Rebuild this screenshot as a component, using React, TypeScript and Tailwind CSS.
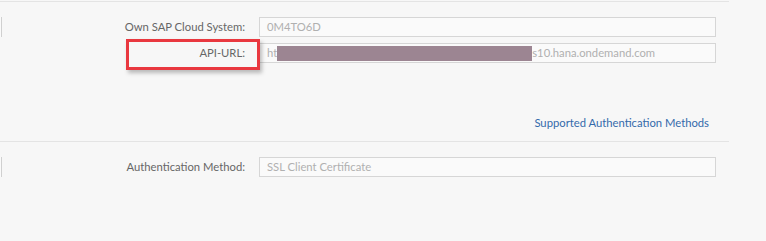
export default function App() {
  return (
    <div className="w-[766px] h-[241px] bg-[#f7f7f7] pt-px font-['Lato','Liberation_Sans',sans-serif] text-[11.25px] leading-[16px]">
      {/* Connection section */}
      <div className="w-[729px] border-t border-[#e4e4e4] pt-[15px] pb-[10px]">
        <div className="w-[716px] flex h-[20px] items-center">
          <div className="w-[2px] h-[20px] border-r border-[#d0d0d0] bg-[#fafafa]" />
          <div className="flex-1 text-right pr-[14px] text-[#666]">Own SAP Cloud System:</div>
          <div className="w-[457px] h-[20px] border border-[#d6d6d6] bg-[#fafafa] pl-[7px] flex items-center text-[#b0b0b0]">
            0M4TO6D
          </div>
        </div>

        <div className="relative w-[716px] flex h-[20px] items-center mt-[6px]">
          <div className="w-[2px] h-[20px]" />
          <div className="flex-1 text-right pr-[14px] text-[#666]">API-URL:</div>
          <div className="w-[457px] h-[20px] border border-[#d6d6d6] bg-[#fafafa] pl-[7px] flex items-center text-[#b0b0b0] overflow-hidden whitespace-nowrap">
            <span>ht</span>
            <span className="inline-block w-[255px] h-[15px] bg-[#9c8592] shrink-0" />
            <span>s10.hana.ondemand.com</span>
          </div>
          {/* annotation */}
          <div className="absolute left-[126px] top-[-4px] w-[134px] h-[31px] border-[3px] border-[#e9383f] shadow-[2px_3px_4px_rgba(0,0,0,0.25)]" />
        </div>

        <div className="mt-[52px] flex justify-end pr-[20px]">
          <span className="text-[#346aab] cursor-pointer">Supported Authentication Methods</span>
        </div>
      </div>

      {/* Authentication section */}
      <div className="w-[729px] border-t border-[#e4e4e4] pt-[15px]">
        <div className="w-[716px] flex h-[20px] items-center">
          <div className="w-[2px] h-[20px] border-r border-[#d0d0d0] bg-[#fafafa]" />
          <div className="flex-1 text-right pr-[14px] text-[#666]">Authentication Method:</div>
          <div className="w-[457px] h-[20px] border border-[#d6d6d6] bg-[#fafafa] pl-[7px] flex items-center text-[#b0b0b0]">
            SSL Client Certificate
          </div>
        </div>
      </div>
    </div>
  );
}
